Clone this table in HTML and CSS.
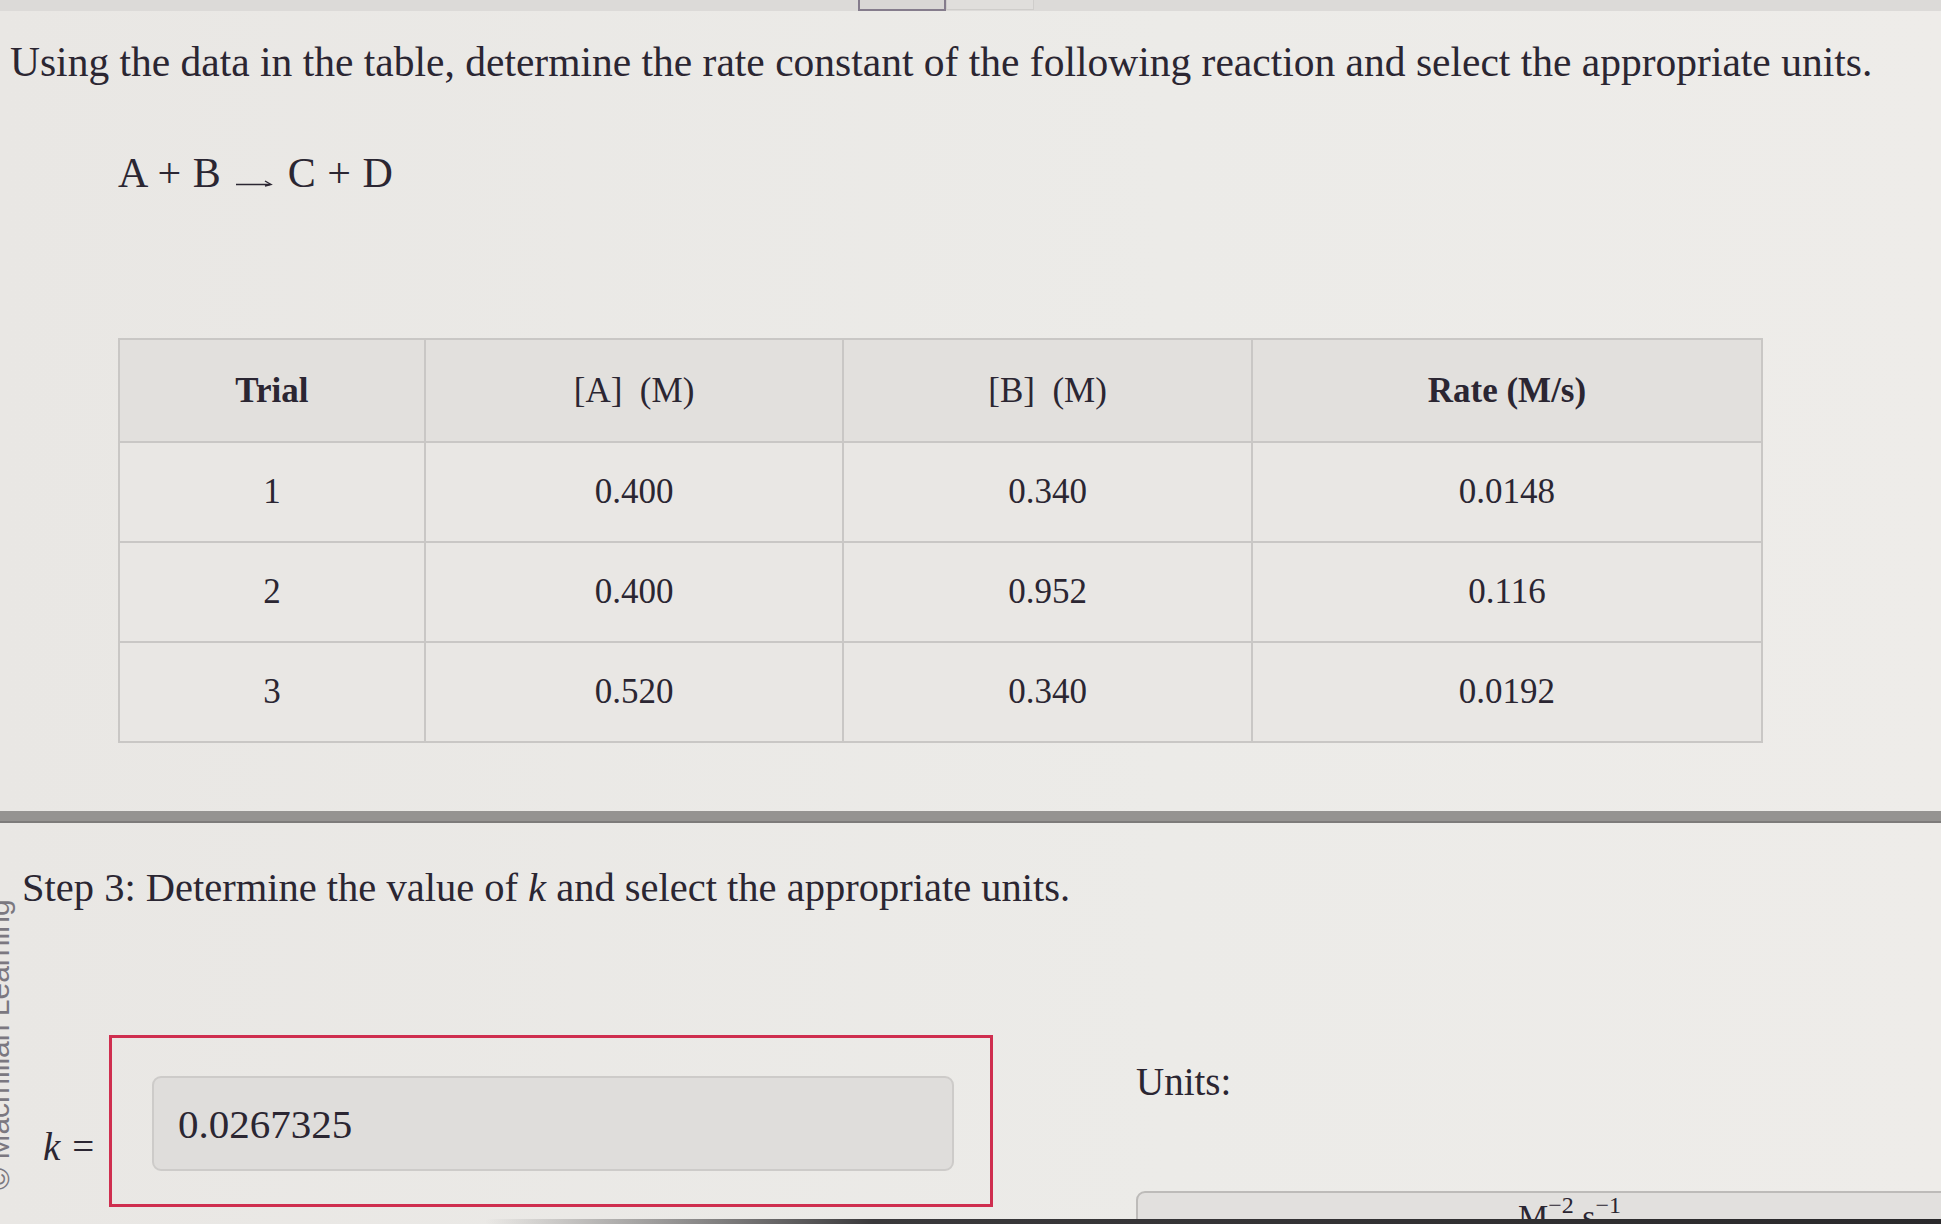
FILE: index.html
```html
<!DOCTYPE html>
<html lang="en">
<head>
<meta charset="utf-8">
<title>Rate constant</title>
<link rel="stylesheet" href="styles.css">
</head>
<body>
<div class="topbar">
  <div class="tab tab-active"></div>
  <div class="tab tab-idle"></div>
</div>

<p class="prompt">Using the data in the table, determine the rate constant of the following reaction and select the appropriate units.</p>

<p class="equation">A + B <svg class="arrow" width="38" height="10" viewBox="0 0 38 10"><path d="M1 6.5 H35" stroke="#2b2632" stroke-width="1.6"/><path d="M30 3 L36 6.5 L30 8" fill="none" stroke="#2b2632" stroke-width="1.4"/></svg> C + D</p>

<table class="data">
  <colgroup>
    <col class="c1"><col class="c2"><col class="c3"><col class="c4">
  </colgroup>
  <thead>
    <tr><th class="bold">Trial</th><th>[A]&nbsp; (M)</th><th>[B]&nbsp; (M)</th><th class="bold">Rate (M/s)</th></tr>
  </thead>
  <tbody>
    <tr><td>1</td><td>0.400</td><td>0.340</td><td>0.0148</td></tr>
    <tr><td>2</td><td>0.400</td><td>0.952</td><td>0.116</td></tr>
    <tr><td>3</td><td>0.520</td><td>0.340</td><td>0.0192</td></tr>
  </tbody>
</table>

<div class="rule"></div>

<p class="step">Step 3: Determine the value of <i>k</i> and select the appropriate units.</p>

<div class="answer-row">
  <div class="k-label"><i>k</i><span class="eq">=</span></div>
  <div class="answer-box">
    <div class="answer-input">0.0267325</div>
  </div>
  <div class="units-col">
    <div class="units-label">Units:</div>
    <div class="units-select">M<sup>−2</sup> s<sup>−1</sup></div>
  </div>
</div>

<div class="copyright">© Macmillan Learning</div>
<div class="bezel"></div>
</body>
</html>
```

FILE: styles.css
```css
html, body {
  margin: 0;
  padding: 0;
}
body {
  width: 1941px;
  height: 1224px;
  overflow: hidden;
  position: relative;
  background: linear-gradient(90deg, #e9e7e4 0%, #ecebe8 60%, #eeece9 100%);
  font-family: "Liberation Serif", "Times New Roman", serif;
  color: #2b2632;
}

.topbar {
  height: 11px;
  background: #dcdad8;
  display: flex;
  padding-left: 858px;
}
.tab {
  height: 9px;
  width: 84px;
}
.tab-active {
  border: 2px solid #857c8c;
  border-top: none;
  background: #d9d7d5;
}
.tab-idle {
  border: 1px solid #cfcdcb;
  border-top: none;
  background: #e0dedc;
  width: 86px;
}

.prompt {
  margin: 29px 0 0 10px;
  font-size: 41.5px;
  line-height: 44px;
  white-space: nowrap;
}

.equation {
  margin: 67px 0 0 118px;
  font-size: 42px;
  line-height: 44px;
  word-spacing: 1px;
}
.arrow {
  vertical-align: -1px;
  margin: 0 3px;
}

.data {
  margin: 143px 0 0 118px;
  width: 1645px;
  border-collapse: collapse;
  table-layout: fixed;
  font-size: 35px;
}
.c1 { width: 247px; }
.c2 { width: 338px; }
.c3 { width: 330px; }
.c4 { width: 412px; }
.data th,
.data td {
  border: 2px solid #c9c7c5;
  text-align: center;
  vertical-align: middle;
  padding: 0;
}
.data th {
  height: 101px;
  background: #e2e0dd;
  font-weight: normal;
}
.data th.bold {
  font-weight: bold;
}
.data td {
  height: 98px;
  background: #e9e7e4;
}

.rule {
  margin-top: 68px;
  height: 10px;
  background: #959391;
  border-bottom: 2px solid #7d7b7a;
}

.step {
  margin: 43px 0 0 22px;
  font-size: 40.5px;
  line-height: 44px;
  white-space: nowrap;
}

.answer-row {
  display: flex;
  align-items: flex-start;
  margin-top: 125px;
}
.k-label {
  margin: 90px 0 0 43px;
  width: 66px;
  font-size: 39px;
  line-height: 44px;
}
.k-label .eq {
  margin-left: 12px;
}
.answer-box {
  width: 884px;
  height: 172px;
  border: 3px solid #cf2e4f;
  padding: 38px 36px 0 40px;
  box-sizing: border-box;
}
.answer-input {
  height: 95px;
  box-sizing: border-box;
  border: 2px solid #cdcbc9;
  border-radius: 9px;
  background: #dfdddb;
  padding: 24px 0 0 24px;
  font-size: 41px;
  line-height: 44px;
}
.units-col {
  flex: 1;
  margin-left: 143px;
  margin-right: -30px;
  padding-top: 25px;
}
.units-label {
  font-size: 39px;
  line-height: 44px;
}
.units-select {
  margin-top: 87px;
  height: 80px;
  border: 2px solid #bdbbb9;
  border-radius: 9px 0 0 0;
  background: #e2e0de;
  font-size: 34px;
  line-height: 40px;
  padding: 4px 0 0 380px;
  box-sizing: border-box;
  white-space: nowrap;
}
.units-select sup {
  font-size: 24px;
  line-height: 0;
  vertical-align: 15px;
}

.copyright {
  position: absolute;
  left: -16px;
  top: 1190px;
  transform-origin: 0 0;
  transform: rotate(-90deg);
  font-family: "Liberation Sans", Arial, sans-serif;
  font-size: 30px;
  line-height: 30px;
  color: #7b7880;
  white-space: nowrap;
}

.bezel {
  position: absolute;
  left: 0;
  right: 0;
  bottom: 0;
  height: 5px;
  background: linear-gradient(90deg, rgba(40,38,40,0) 25%, #3a393b 45%, #2a292b 100%);
}
```
